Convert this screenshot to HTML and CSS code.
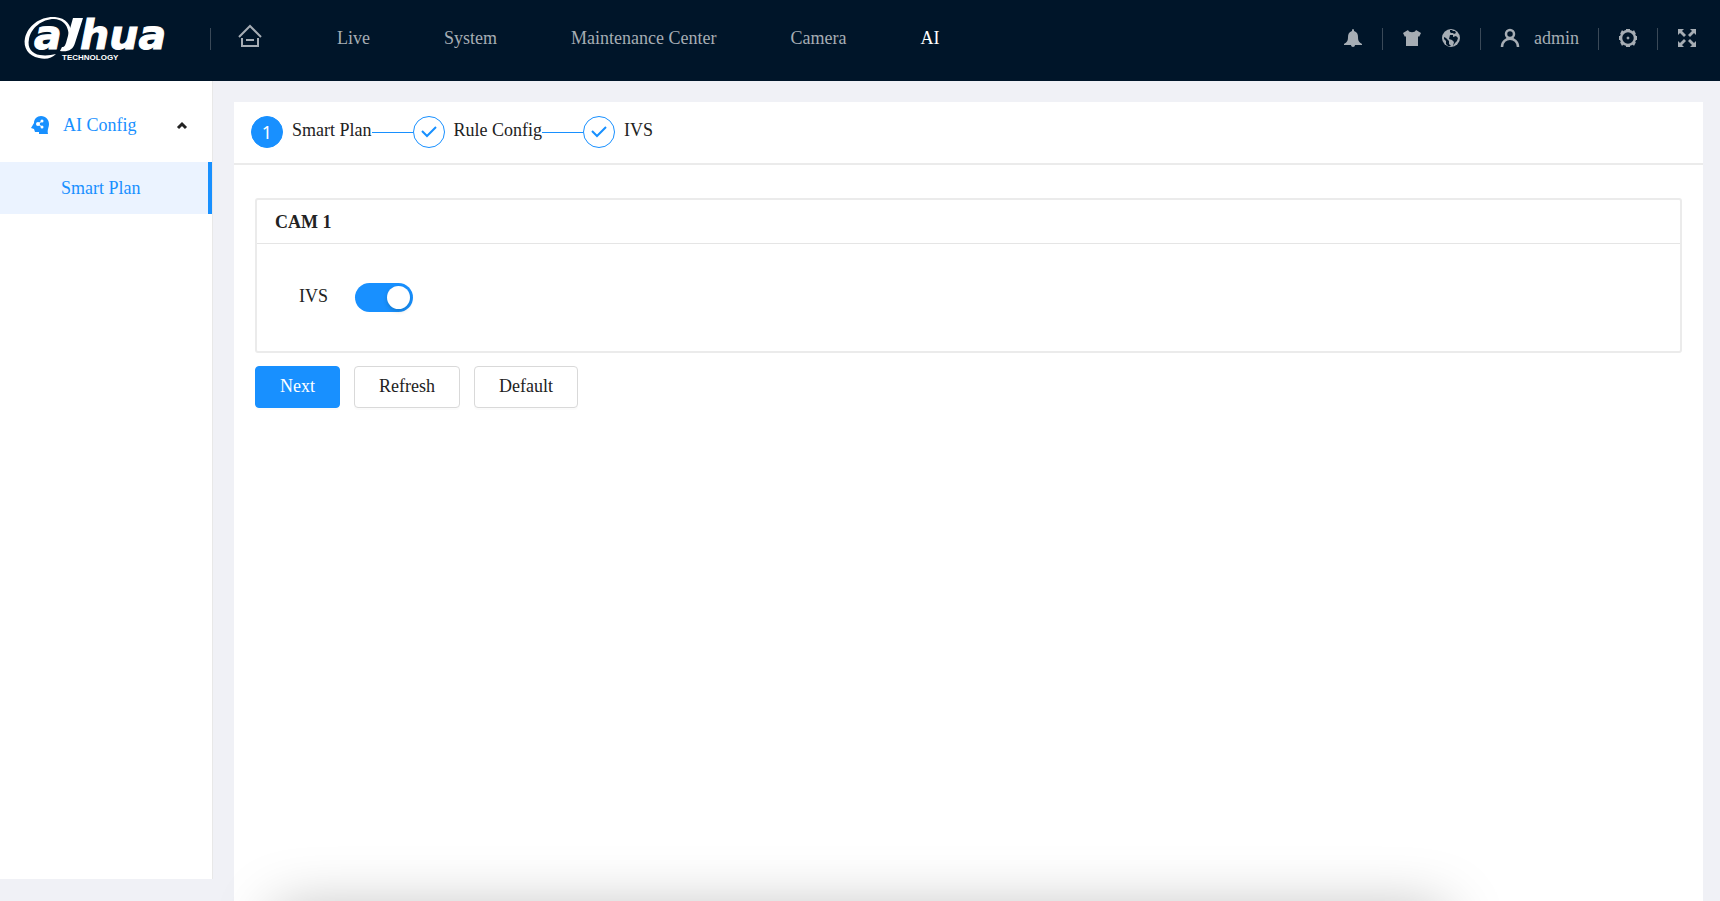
FILE: index.html
```html
<!DOCTYPE html>
<html lang="en">
<head>
	<meta charset="utf-8">
	<title>Smart Plan</title>
	<link rel="stylesheet" href="styles.css">
</head>
<body>
	<header class="header">
		<a class="logo" href="#" aria-label="alhua technology">
			<svg width="144" height="48" viewBox="0 0 144 48" fill="#fff">
				<path d="M34 39C30 43 24 45 17 43C6 41 1 32 3 23C6 10 19 1 33 2C44 3 50 10 49 20C49 24 48 27 46 29C48 19 47 5 32 4C20 4 9 13 7 24C5 33 10 39 18 40C24 41 29 40 34 39Z"/>
				<text class="logo-name" x="12" y="34">a</text>
				<path d="M51 3H61L53 28C51 35 46 37 38 36L40 32C43 32 43 30 44 28Z"/>
				<text class="logo-name" x="58" y="34">hua</text>
				<text class="logo-sub" x="40" y="45">TECHNOLOGY</text>
			</svg>
		</a>
		<span class="divider"></span>
		<a class="home" href="#" aria-label="Home">
			<svg width="24" height="24" viewBox="0 0 24 24" fill="none" stroke="currentColor" stroke-width="2">
				<path d="M1 13L12 2L23 13M4 14V22H20V14M8 16H16"/>
			</svg>
		</a>
		<nav class="nav">
			<a href="#">Live</a>
			<a href="#">System</a>
			<a href="#">Maintenance Center</a>
			<a href="#">Camera</a>
			<a class="active" href="#">AI</a>
		</nav>
		<div class="tools">
			<button class="icon-btn" aria-label="Alarms">
				<svg width="20" height="20" viewBox="0 0 20 20" fill="currentColor">
					<path d="M10 1C11 1 11 2 11 3C14 4 15 6 15 9C15 13 16 14 19 16V17H12C12 18 11 19 10 19S8 18 8 17H1V16C4 14 5 13 5 9C5 6 6 4 9 3C9 2 9 1 10 1Z"/>
				</svg>
			</button>
			<span class="divider"></span>
			<button class="icon-btn" aria-label="Theme">
				<svg width="20" height="20" viewBox="0 0 20 20" fill="currentColor">
					<path d="M6 2C7 5 13 5 14 2L19 5L17 9L16 8V18H4V8L3 9L1 5Z"/>
				</svg>
			</button>
			<button class="icon-btn" aria-label="Language">
				<svg width="20" height="20" viewBox="0 0 20 20">
					<circle cx="10" cy="10" r="9" fill="currentColor"/>
					<path fill="#001529" d="M9 2L11 2L12 3L14 3L15 5L13 6L12 5L10 5L9 4ZM3 9L5 10L8 13L8 16L10 18H7L5 16V13L3 11ZM9 7L12 7L12 9L15 8L17 10L16 13L14 15L12 18L13 14L11 12L8 11Z"/>
				</svg>
			</button>
			<span class="divider"></span>
			<button class="icon-btn user">
				<svg width="20" height="20" viewBox="0 0 20 20" fill="none" stroke="currentColor" stroke-width="2.5">
					<circle cx="10" cy="6" r="4"/>
					<path d="M2 19C2 8 18 8 18 19"/>
				</svg>
				<span>admin</span>
			</button>
			<span class="divider"></span>
			<button class="icon-btn" aria-label="Settings">
				<svg width="20" height="20" viewBox="0 0 20 20" fill="none" stroke="currentColor">
					<circle cx="10" cy="10" r="7" stroke-width="2.5"/>
					<path d="M10 1V3M10 17V19M1 10H3M17 10H19M3 4L5 5M15 15L17 16M3 16L5 15M15 5L17 4" stroke-width="4"/>
					<circle cx="10" cy="10" r="1" fill="currentColor"/>
				</svg>
			</button>
			<span class="divider"></span>
			<button class="icon-btn" aria-label="Full screen">
				<svg width="20" height="20" viewBox="0 0 20 20" fill="currentColor">
					<path d="M1 1H7L5 3L9 7L7 9L3 5L1 7ZM19 1V7L17 5L13 9L11 7L15 3L13 1ZM1 19V13L3 15L7 11L9 13L5 17L7 19ZM19 19H13L15 17L11 13L13 11L17 15L19 13Z"/>
				</svg>
			</button>
		</div>
	</header>
	<div class="layout">
		<aside class="sidebar">
			<button class="menu-title">
				<svg width="20" height="20" viewBox="0 0 20 20">
					<path fill="currentColor" d="M11 1C16 1 19 5 19 9C19 13 17 14 18 19H9V17H5L4 14L1 13L4 8C4 4 7 1 11 1Z"/>
					<path stroke="#fff" fill="none" d="M12 6L8 9L12 12"/>
					<circle cx="12" cy="6" r="1.5" fill="#fff"/>
					<circle cx="8" cy="9" r="2" fill="#fff"/>
					<circle cx="12" cy="12" r="1.5" fill="#fff"/>
				</svg>
				<span>AI Config</span>
				<svg class="arrow" width="12" height="8" viewBox="0 0 12 8" fill="none" stroke="#222" stroke-width="3">
					<path d="M2 7L6 3L10 7"/>
				</svg>
			</button>
			<a class="menu-item" href="#">Smart Plan</a>
		</aside>
		<main class="content">
			<ol class="steps">
				<li class="current"><span class="step-icon">1</span><span class="step-title">Smart Plan</span></li>
				<li>
					<span class="step-icon"><svg width="16" height="12" viewBox="0 0 16 12" fill="none" stroke="currentColor" stroke-width="2"><path d="M1 5L6 10L15 1"/></svg></span>
					<span class="step-title">Rule Config</span>
				</li>
				<li>
					<span class="step-icon"><svg width="16" height="12" viewBox="0 0 16 12" fill="none" stroke="currentColor" stroke-width="2"><path d="M1 5L6 10L15 1"/></svg></span>
					<span class="step-title">IVS</span>
				</li>
			</ol>
			<div class="panel">
				<section class="card">
					<h2>CAM 1</h2>
					<div class="card-body">
						<label for="ivs">IVS</label>
						<input class="switch" type="checkbox" role="switch" id="ivs" checked>
					</div>
				</section>
				<div class="actions">
					<button class="btn primary">Next</button>
					<button class="btn">Refresh</button>
					<button class="btn">Default</button>
				</div>
			</div>
		</main>
	</div>
	<div class="bottom-shadow"></div>
</body>
</html>
```
FILE: styles.css
```css
* {
	box-sizing: border-box;
}

body {
	margin: 0;
	min-height: 100vh;
	display: flex;
	flex-direction: column;
	overflow: hidden;
	background: #f0f1f6;
	color: #222;
	font: 18px/24px "Liberation Serif", "Times New Roman", serif;
}

button {
	font: inherit;
	cursor: pointer;
}

a {
	color: inherit;
	text-decoration: none;
}

svg {
	display: block;
	flex: none;
	overflow: visible;
}

.header {
	display: flex;
	align-items: center;
	height: 81px;
	padding: 0 23px 4px 22px;
	background: #001529;
	color: #a6adb4;
}

.logo {
	margin-right: 44px;
}

.logo-name {
	font: italic bold 41px "DejaVu Sans", sans-serif;
	stroke: #fff;
	stroke-width: 1px;
}

.logo-sub {
	font: bold 8px "Liberation Sans", sans-serif;
}

.divider {
	width: 1px;
	height: 22px;
	background: #3a4958;
}

.home {
	margin: 0 75px 6px 27px;
}

.nav {
	display: flex;
	gap: 74px;
	padding-bottom: 1px;
}

.nav .active {
	color: #fff;
}

.tools {
	display: flex;
	align-items: center;
	gap: 19px;
	margin-left: auto;
}

.icon-btn {
	display: flex;
	align-items: center;
	gap: 14px;
	padding: 0 0 2px;
	border: 0;
	background: none;
	color: inherit;
}

.layout {
	display: flex;
	flex: 1;
}

.sidebar {
	width: 213px;
	margin-bottom: 22px;
	border-right: 1px solid #e8e8e8;
	background: #fff;
	color: #1890ff;
}

.menu-title {
	display: flex;
	align-items: center;
	gap: 13px;
	width: 100%;
	height: 81px;
	padding: 6px 24px 0 30px;
	border: 0;
	background: none;
	color: inherit;
}

.arrow {
	margin-left: auto;
}

.menu-item {
	display: block;
	padding: 14px 0 14px 61px;
	border-right: 4px solid #1890ff;
	background: #ebf3ff;
}

.content {
	flex: 1;
	margin: 21px 17px 0 21px;
	background: #fff;
}

.steps {
	display: flex;
	margin: 0;
	padding: 14px 17px 15px;
	border-bottom: 2px solid #ebebeb;
	list-style: none;
}

.steps li {
	display: flex;
	align-items: center;
}

.steps li + li::before {
	content: "";
	width: 41px;
	height: 1px;
	background: #1890ff;
}

.step-icon {
	display: flex;
	align-items: center;
	justify-content: center;
	width: 32px;
	height: 32px;
	margin-right: 9px;
	border: 1px solid #1890ff;
	border-radius: 50%;
	color: #1890ff;
	font-family: "Noto Sans", sans-serif;
}

.current .step-icon {
	background: #1890ff;
	color: #fff;
}

.step-title {
	padding-bottom: 4px;
}

.panel {
	padding: 33px 21px;
}

.card {
	border: 2px solid #ebebeb;
	border-radius: 3px;
}

.card h2 {
	margin: 0;
	padding: 10px 18px 9px;
	border-bottom: 1px solid #e5e5e5;
	font-size: 18px;
}

.card-body {
	display: flex;
	align-items: center;
	gap: 27px;
	height: 107px;
	padding-left: 42px;
}

.card-body label {
	padding-bottom: 4px;
}

.switch {
	appearance: none;
	width: 58px;
	height: 29px;
	margin: 0;
	padding: 3px;
	border-radius: 15px;
	background: #bfbfbf;
}

.switch::before {
	content: "";
	display: block;
	width: 23px;
	height: 23px;
	border-radius: 50%;
	background: #fff;
	box-shadow: 0 2px 4px #00230b33;
}

.switch:checked {
	background: #1890ff;
}

.switch:checked::before {
	margin-left: auto;
}

.actions {
	display: flex;
	gap: 14px;
	margin-top: 13px;
}

.btn {
	height: 42px;
	padding: 0 24px 2px;
	border: 1px solid #d9d9d9;
	border-radius: 4px;
	background: #fff;
	color: #222;
	box-shadow: 0 2px 0 #00000004;
}

.btn.primary {
	border-color: #1890ff;
	background: #1890ff;
	color: #fff;
}

/* shadow thrown up from below the window edge */
.bottom-shadow {
	position: fixed;
	top: 100%;
	left: 16%;
	right: 16%;
	height: 60px;
	box-shadow: 0 8px 60px #0004;
}
```
